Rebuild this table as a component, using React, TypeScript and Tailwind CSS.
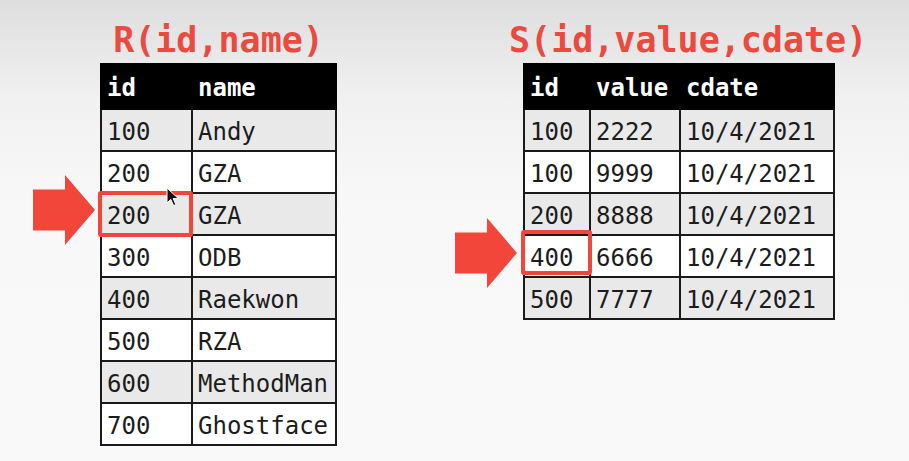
import React from 'react';

type Table = {
  cols: { label: string; width: number }[];
  rows: string[][];
};

const rTable: Table = {
  cols: [
    { label: 'id', width: 91 },
    { label: 'name', width: 144 },
  ],
  rows: [
    ['100', 'Andy'],
    ['200', 'GZA'],
    ['200', 'GZA'],
    ['300', 'ODB'],
    ['400', 'Raekwon'],
    ['500', 'RZA'],
    ['600', 'MethodMan'],
    ['700', 'Ghostface'],
  ],
};

const sTable: Table = {
  cols: [
    { label: 'id', width: 66 },
    { label: 'value', width: 90 },
    { label: 'cdate', width: 154 },
  ],
  rows: [
    ['100', '2222', '10/4/2021'],
    ['100', '9999', '10/4/2021'],
    ['200', '8888', '10/4/2021'],
    ['400', '6666', '10/4/2021'],
    ['500', '7777', '10/4/2021'],
  ],
};

const mono = "font-['DejaVu_Sans_Mono','Liberation_Mono',monospace]";

function Arrow() {
  return (
    <svg width="63" height="70" viewBox="0 0 63 70">
      <path d="M0 14.5 H32 V0 L62 35 L32 70 V55.5 H0 Z" fill="#f2463b" />
    </svg>
  );
}

function Cursor() {
  return (
    <svg width="14" height="20" viewBox="0 0 14 20">
      <path d="M1 1 V16 L4.8 12.4 L7.6 18.6 L9.9 17.6 L7.2 11.6 H12.4 Z" fill="#111" stroke="#fff" strokeWidth="1" />
    </svg>
  );
}

function DataTable({ table }: { table: Table }) {
  const total = table.cols.reduce((sum, c) => sum + c.width, 0);
  return (
    <table className={`border-collapse table-fixed ${mono} text-[24px]`} style={{ width: total }}>
      <colgroup>
        {table.cols.map((c) => (
          <col key={c.label} style={{ width: c.width }} />
        ))}
      </colgroup>
      <thead>
        <tr className="bg-black text-white h-[45px]">
          {table.cols.map((c) => (
            <th key={c.label} className="border-2 border-black text-left font-bold px-[5px] pt-[2px] leading-none">
              {c.label}
            </th>
          ))}
        </tr>
      </thead>
      <tbody>
        {table.rows.map((row, i) => (
          <tr key={i} className={`h-[42px] ${i % 2 === 0 ? 'bg-[#e9e9e9]' : 'bg-white'}`}>
            {row.map((cell, j) => (
              <td key={j} className="border-2 border-[#1a1a1a] px-[5px] pt-[3px] leading-none text-[#1c1c1c]">
                {cell}
              </td>
            ))}
          </tr>
        ))}
      </tbody>
    </table>
  );
}

export default function App() {
  return (
    <div className="w-[909px] h-[461px] overflow-hidden bg-[linear-gradient(to_bottom,#dedede_0%,#f1f1f1_22%,#f8f8f8_45%,#f9f9f9_100%)]">
      <div className="flex pt-[20px]">
        <div className="ml-[100px] flex flex-col items-center">
          <div className={`${mono} font-bold text-[35px] leading-[40px] text-[#ea4a40] mb-[3px]`}>R(id,name)</div>
          <div className="relative">
            <DataTable table={rTable} />
            <div className="absolute left-[-67px] top-[112px]">
              <Arrow />
            </div>
            <div className="absolute left-[-2px] top-[128px] w-[95px] h-[46px] border-4 border-[#f2463b] rounded-[3px]" />
            <div className="absolute left-[66px] top-[124px]">
              <Cursor />
            </div>
          </div>
        </div>

        <div className="ml-[172px] flex flex-col">
          <div className={`${mono} font-bold text-[35px] leading-[40px] text-[#ea4a40] mb-[3px]`}>S(id,value,cdate)</div>
          <div className="relative ml-[14px]">
            <DataTable table={sTable} />
            <div className="absolute left-[-68px] top-[155px]">
              <Arrow />
            </div>
            <div className="absolute left-[-2px] top-[167px] w-[71px] h-[45px] border-4 border-[#f2463b] rounded-[3px]" />
          </div>
        </div>
      </div>
    </div>
  );
}
